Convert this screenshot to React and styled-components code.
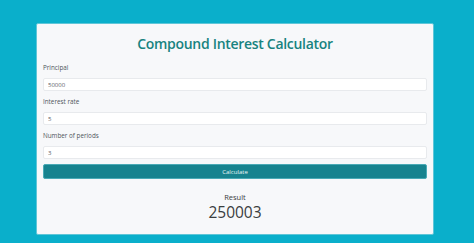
import React, { useState } from 'react';
import styled, { createGlobalStyle } from 'styled-components';

const GlobalStyle = createGlobalStyle`
  html, body {
    margin: 0;
    padding: 0;
    background: #0aafcb;
    font-family: "Open Sans", "Noto Sans", sans-serif;
  }
`;

const Page = styled.div`
  width: 474px;
  height: 243px;
  padding: 23px 40px 0 36px;
  box-sizing: border-box;
  background: #0aafcb;
`;

const Card = styled.div`
  display: flex;
  flex-direction: column;
  height: 212px;
  padding: 10px 6px 0 6px;
  box-sizing: border-box;
  background: #f7f8fa;
  border: 1px solid #5fc6d8;
  border-radius: 2px;
`;

const Title = styled.h1`
  margin: 0 0 10px;
  height: 20px;
  line-height: 20px;
  font-size: 14px;
  font-weight: 600;
  letter-spacing: -0.3px;
  color: #178380;
  text-align: center;
`;

const Field = styled.div`
  display: flex;
  flex-direction: column;
  gap: 6px;
  margin-bottom: ${({ last }) => (last ? '5px' : '7px')};
`;

const Label = styled.label`
  height: 8px;
  line-height: 8px;
  font-size: 6.3px;
  color: #50565b;
`;

const Input = styled.input`
  height: 13px;
  padding: 0 4px;
  box-sizing: border-box;
  border: 1px solid #e8eaed;
  border-radius: 2px;
  background: #fff;
  font-family: inherit;
  font-size: 6px;
  color: #5d6166;
  outline: none;
`;

const Button = styled.button`
  height: 15px;
  border: 1px solid #4aaab6;
  border-radius: 2px;
  background: #17838f;
  color: #e9f6f7;
  font-family: inherit;
  font-size: 6px;
  padding: 0;
  cursor: pointer;
`;

const Result = styled.div`
  display: flex;
  flex-direction: column;
  align-items: center;
  margin-top: 13px;
`;

const ResultLabel = styled.div`
  height: 10px;
  line-height: 10px;
  font-size: 7.5px;
  color: #3a3d40;
`;

const ResultValue = styled.div`
  margin-top: 1px;
  height: 18px;
  line-height: 18px;
  font-size: 15.5px;
  color: #3a3d40;
`;

const fields = [
  { key: 'principal', label: 'Principal' },
  { key: 'rate', label: 'Interest rate' },
  { key: 'periods', label: 'Number of periods' },
];

export default function App() {
  const [values, setValues] = useState({ principal: '50000', rate: '5', periods: '3' });
  const [result, setResult] = useState(250003);

  const calculate = () => {
    const p = parseFloat(values.principal) || 0;
    const r = parseFloat(values.rate) || 0;
    const n = parseFloat(values.periods) || 0;
    setResult(Math.round(p * Math.pow(1 + r / 100, n)));
  };

  return (
    <>
      <GlobalStyle />
      <Page>
        <Card>
          <Title>Compound Interest Calculator</Title>
          {fields.map((f, i) => (
            <Field key={f.key} last={i === fields.length - 1}>
              <Label htmlFor={f.key}>{f.label}</Label>
              <Input
                id={f.key}
                value={values[f.key]}
                onChange={(e) => setValues({ ...values, [f.key]: e.target.value })}
              />
            </Field>
          ))}
          <Button onClick={calculate}>Calculate</Button>
          <Result>
            <ResultLabel>Result</ResultLabel>
            <ResultValue>{result}</ResultValue>
          </Result>
        </Card>
      </Page>
    </>
  );
}
